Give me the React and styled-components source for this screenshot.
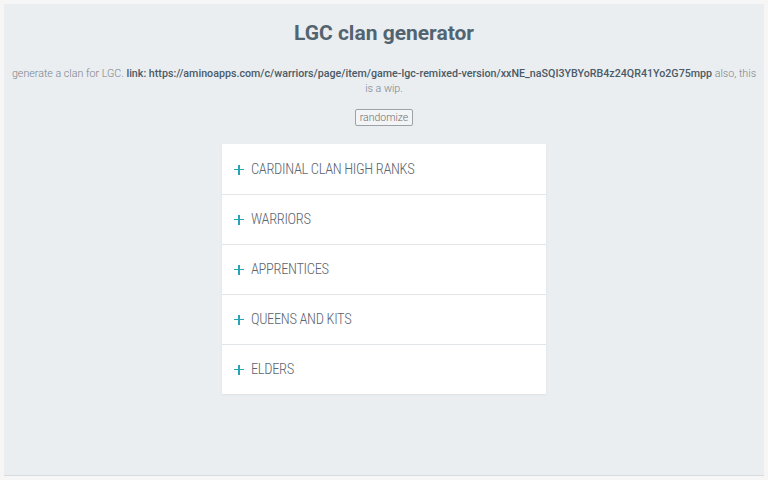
import React from 'react';
import styled, { createGlobalStyle } from 'styled-components';

const GlobalStyle = createGlobalStyle`
  html, body {
    margin: 0;
    padding: 0;
    background: #f6f6f6;
  }
  body {
    font-family: Roboto, "Liberation Sans", sans-serif;
  }
`;

const Page = styled.div`
  padding: 4px;
  height: 480px;
  box-sizing: border-box;
`;

const Panel = styled.main`
  height: 472px;
  box-sizing: border-box;
  background: #eaeef1;
  border-bottom: 1px solid #d6dbdf;
  padding: 16px 0 0;
  text-align: center;
`;

const Title = styled.h1`
  margin: 0;
  font-size: 21px;
  font-weight: 700;
  color: #526470;
  line-height: 26px;
`;

const Intro = styled.p`
  margin: 20px 0 0;
  padding: 0 4px;
  font-size: 10.7px;
  font-weight: 300;
  line-height: 15px;
  color: #7a8289;

  b {
    font-weight: 500;
    color: #4b5a66;
  }
`;

const Button = styled.button`
  margin-top: 13px;
  font-family: Roboto, "Liberation Sans", sans-serif;
  font-size: 10.5px;
  font-weight: 300;
  color: #6a6f74;
  background: #f3f4f5;
  border: 1px solid #9ca2a7;
  border-radius: 2px;
  padding: 1px 4px;
  line-height: 13px;
`;

const Accordion = styled.ul`
  list-style: none;
  margin: 18px auto 0;
  padding: 0;
  width: 324px;
  background: #fff;
  text-align: left;
  box-shadow: 0 1px 2px rgba(0, 0, 0, 0.06);
`;

const Item = styled.li`
  height: 49px;
  display: flex;
  align-items: center;
  padding-left: 12px;
  border-top: 1px solid ${props => (props.$first ? 'transparent' : '#e3e6e8')};
  cursor: pointer;
`;

const Plus = styled.span`
  width: 10px;
  height: 10px;
  margin-right: 7px;
  position: relative;

  &::before,
  &::after {
    content: '';
    position: absolute;
    background: #27a4b6;
  }
  &::before {
    left: 0;
    top: 4px;
    width: 10px;
    height: 1.5px;
  }
  &::after {
    left: 4.25px;
    top: 0;
    width: 1.5px;
    height: 10px;
  }
`;

const Label = styled.span`
  font-family: Roboto, "Liberation Sans", sans-serif;
  font-stretch: 75%;
  font-weight: 300;
  font-size: 14.5px;
  letter-spacing: -0.35px;
  color: #5b6670;
  text-transform: uppercase;
`;

const sections = [
  'cardinal clan high ranks',
  'warriors',
  'apprentices',
  'queens and kits',
  'elders',
];

export default function App() {
  return (
    <Page>
      <GlobalStyle />
      <Panel>
        <Title>LGC clan generator</Title>
        <Intro>
          generate a clan for LGC. <b>link: https://aminoapps.com/c/warriors/page/item/game-lgc-remixed-version/xxNE_naSQI3YBYoRB4z24QR41Yo2G75mpp</b> also, this is a wip.
        </Intro>
        <Button>randomize</Button>
        <Accordion>
          {sections.map((s, i) => (
            <Item key={s} $first={i === 0}>
              <Plus />
              <Label>{s}</Label>
            </Item>
          ))}
        </Accordion>
      </Panel>
    </Page>
  );
}
